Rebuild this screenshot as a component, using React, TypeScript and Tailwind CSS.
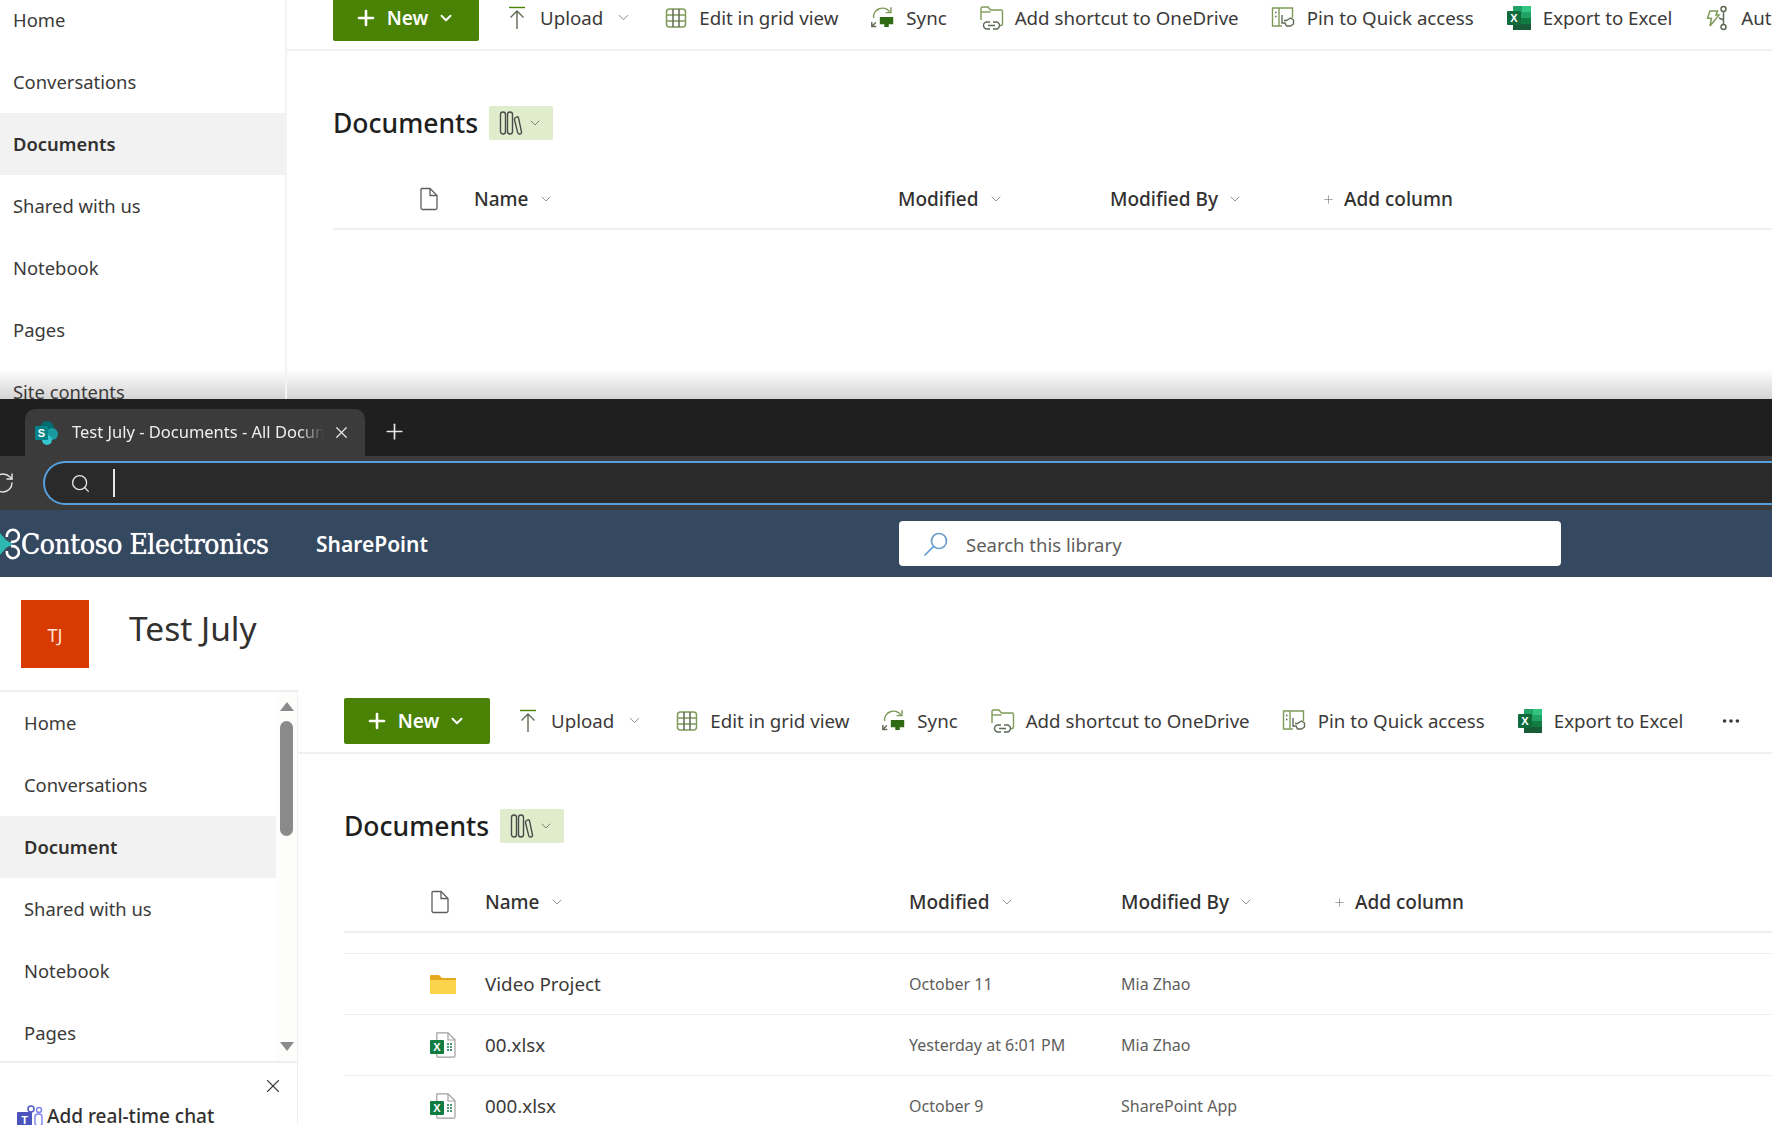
import React from 'react';
import { ChevronDown, Plus, Search, X, RotateCw, MoreHorizontal } from 'lucide-react';

const UI_FONT = 'font-["Noto_Sans",sans-serif]';

const GREEN = '#498205';
const OLIVE = '#7d9a58';
const GREY = '#5f6b55';

function UploadIcon() {
  return (
    <svg width="24" height="26" viewBox="0 0 24 26" fill="none" stroke={GREEN} strokeWidth="1.4">
      <path d="M4 2.5h16" />
      <path d="M12 24V6M5.5 12.5L12 6l6.5 6.5" stroke={GREY} />
    </svg>
  );
}

function GridIcon() {
  return (
    <svg width="24" height="24" viewBox="0 0 24 24" fill="none" stroke={OLIVE} strokeWidth="1.5">
      <rect x="2.5" y="3" width="19" height="18" rx="3" />
      <path d="M2.5 9h19M2.5 15h19" />
      <path d="M9 3v18M15 3v18" stroke={GREY} />
    </svg>
  );
}

function SyncIcon() {
  return (
    <svg width="25" height="24" viewBox="0 0 28 26" fill="none" stroke={OLIVE} strokeWidth="1.6">
      <path d="M4 13a10 10 0 0 1 18-7" />
      <path d="M23.500 1v6h-6" />
      <path d="M2 17.500v5h5M2.500 22l4-4" stroke={GREY} />
      <path d="M11 12h15v8h-5v3h-5v-3h-5z" fill="#2f6b12" stroke="none" />
    </svg>
  );
}

function ShortcutIcon() {
  return (
    <svg width="25" height="26" viewBox="0 0 25 26" fill="none" stroke={OLIVE} strokeWidth="1.4">
      <path d="M2 15V3.500A1.500 1.500 0 0 1 3.500 2H9l2.500 3H22a1.500 1.500 0 0 1 1.500 1.500V19a1.500 1.500 0 0 1-1.500 1.500h-1" />
      <path d="M2 7h9.500" />
      <path d="M11 17H8a3.500 3.500 0 0 0 0 7h3M14 17h3a3.500 3.500 0 0 1 0 7h-3M9 20.500h7" stroke={GREY} />
    </svg>
  );
}

function PinIcon() {
  return (
    <svg width="25" height="24" viewBox="0 0 25 24" fill="none" stroke={OLIVE} strokeWidth="1.4">
      <path d="M11 20H1.500V2h20v10" />
      <path d="M8 2v18" />
      <path d="M4 6.500h1.500M4 10.500h1.500" stroke={GREY} />
      <path d="M11 9v8h3l1.500 3h4l3-2v-4l-3-2-4 2.500H13" stroke={GREY} />
    </svg>
  );
}

function ExcelIcon() {
  return (
    <svg width="26" height="26" viewBox="0 0 26 26">
      <rect x="7" y="1" width="18" height="24" rx="1" fill="#21a366" />
      <rect x="16" y="1" width="9" height="6" fill="#33c481" />
      <rect x="7" y="13" width="18" height="6" fill="#107c41" />
      <rect x="7" y="19" width="18" height="6" fill="#185c37" />
      <rect x="1" y="6" width="14" height="14" rx="1" fill="#0f6b3c" />
      <text x="8" y="17" fontSize="11" fontWeight="700" fill="#fff" textAnchor="middle" fontFamily="Liberation Sans">
        X
      </text>
    </svg>
  );
}

function AutomateIcon() {
  return (
    <svg width="26" height="26" viewBox="0 0 26 26" fill="none" stroke={OLIVE} strokeWidth="1.5">
      <path d="M6 6h7.500l-1.500 4h3l-9 11 1.500-7.500-4-.5z" />
      <circle cx="19.500" cy="4" r="2.500" stroke={GREY} />
      <circle cx="19.500" cy="22" r="2.500" stroke={GREY} />
      <path d="M19.500 6.500v13M15 13l4.500 2" stroke={GREY} />
    </svg>
  );
}

function LibraryIcon() {
  return (
    <svg width="24" height="26" viewBox="0 0 24 26" fill="none" stroke="#4a4a48" strokeWidth="1.4">
      <rect x="1.500" y="2" width="5" height="22" rx="2.500" />
      <rect x="8.500" y="2" width="5" height="22" rx="2.500" />
      <path d="M15.500 8.500l2-1.500c1-.6 1.800 0 2 .8l3 14c.3 1.300-.5 2-1.500 2.200s-2-.3-2.300-1.400l-3.200-13z" />
    </svg>
  );
}

function PageIcon() {
  return (
    <svg width="20" height="24" viewBox="0 0 20 24" fill="none" stroke="#605e5c" strokeWidth="1.3">
      <path d="M3 1.500h8l7 7V21a1.500 1.500 0 0 1-1.500 1.500h-13A1.500 1.500 0 0 1 2 21V2.500a1 1 0 0 1 1-1z" />
      <path d="M11 1.500v7h7" />
    </svg>
  );
}

function FolderIcon() {
  return (
    <svg width="26" height="20" viewBox="0 0 26 20">
      <path d="M0 2a1 1 0 0 1 1-1h8l3 3h13a1 1 0 0 1 1 1v14a1 1 0 0 1-1 1H1a1 1 0 0 1-1-1z" fill="#e4a91c" />
      <path d="M0 6h26v13a1 1 0 0 1-1 1H1a1 1 0 0 1-1-1z" fill="#fcd34d" />
    </svg>
  );
}

function XlsxIcon() {
  return (
    <svg width="26" height="26" viewBox="0 0 26 26">
      <path d="M7 .8h11l7 7V24a1.200 1.200 0 0 1-1.200 1.200H8A1.200 1.200 0 0 1 6.800 24V1z" fill="#fff" stroke="#a19f9d" strokeWidth="1.200" />
      <path d="M18 1v7h7" fill="none" stroke="#a19f9d" strokeWidth="1.200" />
      <path d="M17 11h2v2h-2zM20 11h2v2h-2zM17 14h2v2h-2zM20 14h2v2h-2zM17 17h2v2h-2zM20 17h2v2h-2z" fill="#4a9a78" />
      <rect x="0" y="8" width="14" height="14" rx="1" fill="#107c41" />
      <text x="7" y="19" fontSize="11" fontWeight="700" fill="#fff" textAnchor="middle" fontFamily="Liberation Sans">
        X
      </text>
    </svg>
  );
}

function SharePointLogo() {
  return (
    <svg width="24" height="24" viewBox="0 0 24 24">
      <circle cx="12" cy="7" r="7" fill="#036c70" />
      <circle cx="17" cy="13" r="6" fill="#1a9ba1" />
      <circle cx="12" cy="19" r="5" fill="#37c6d0" />
      <rect x="0" y="5" width="13" height="14" rx="1" fill="#038387" />
      <text x="6.500" y="16" fontSize="11" fontWeight="700" fill="#fff" textAnchor="middle" fontFamily="Liberation Sans">
        S
      </text>
    </svg>
  );
}

function ContosoLogo() {
  return (
    <svg width="20" height="38" viewBox="0 0 20 38" fill="none">
      <path d="M0 8l6 7 7 4-7 4-6 7z" fill="#2fb8b0" />
      <path d="M7 12a6 6 0 1 1 4 4.500" stroke="#fff" strokeWidth="2.600" />
      <path d="M7 26a6 6 0 1 0 4-4.500" stroke="#fff" strokeWidth="2.600" />
    </svg>
  );
}

function LibrarySearchIcon() {
  return (
    <svg width="26" height="26" viewBox="0 0 26 26" fill="none" stroke="#5b9bd5" strokeWidth="1.700">
      <circle cx="16" cy="10" r="7.500" stroke="#6f9fc8" />
      <path d="M10.500 15.500L2 24" strokeLinecap="round" />
    </svg>
  );
}

function TeamsIcon() {
  return (
    <svg width="26" height="22" viewBox="0 0 26 22">
      <circle cx="14" cy="4" r="3" fill="none" stroke="#5059c9" strokeWidth="1.500" />
      <circle cx="22" cy="5" r="2.500" fill="none" stroke="#7b83eb" strokeWidth="1.400" />
      <rect x="18" y="9" width="7" height="12" rx="3" fill="none" stroke="#7b83eb" strokeWidth="1.400" />
      <rect x="0" y="7" width="15" height="15" rx="1" fill="#4b53bc" />
      <text x="7.500" y="18.500" fontSize="11" fontWeight="700" fill="#fff" textAnchor="middle" fontFamily="Liberation Sans">
        T
      </text>
    </svg>
  );
}

function ToolbarItem({ icon, label, chevron }: { icon: React.ReactNode; label: string; chevron?: boolean }) {
  return (
    <div className="flex items-center gap-[11px] text-[18.700px] text-[#3b3a39] whitespace-nowrap">
      {icon}
      <span>{label}</span>
      {chevron && <ChevronDown size={17} strokeWidth={1.200} className="ml-[1px] text-[#7a7876]" />}
    </div>
  );
}

function Toolbar({ children, more }: { children?: React.ReactNode; more?: boolean }) {
  return (
    <div className="flex h-[62px] shrink-0 items-center gap-[32px] border-b-2 border-[#f0f0f0] pb-[2px] pl-[46px]">
      <div className="-mr-[6px] flex h-[46px] w-[146px] shrink-0 items-center justify-center gap-[9px] rounded-[2px] bg-[#498205] pr-[3px] text-[19px] font-semibold text-white">
        <Plus size={24} strokeWidth={2.600} />
        <span>New</span>
        <ChevronDown size={18} strokeWidth={2.600} />
      </div>
      <ToolbarItem icon={<UploadIcon />} label="Upload" chevron />
      <ToolbarItem icon={<GridIcon />} label="Edit in grid view" />
      <ToolbarItem icon={<SyncIcon />} label="Sync" />
      <ToolbarItem icon={<ShortcutIcon />} label="Add shortcut to OneDrive" />
      <ToolbarItem icon={<PinIcon />} label="Pin to Quick access" />
      <ToolbarItem icon={<ExcelIcon />} label="Export to Excel" />
      {children}
      {more && <MoreHorizontal size={22} className="ml-[5px] text-[#3b3a39]" />}
    </div>
  );
}

function ColumnHeader({ label, width }: { label: string; width: string }) {
  return (
    <div className={`flex items-center gap-[9px] text-[19px] font-medium text-[#323130] ${width}`}>
      <span>{label}</span>
      <ChevronDown size={16} strokeWidth={1.200} className="text-[#7a7876]" />
    </div>
  );
}

function LibraryHeader() {
  return (
    <div className="pl-[46px]">
      <div className="mt-[55px] flex h-[34px] items-center gap-[11px]">
        <h2 className="mt-[1px] text-[26.500px] font-medium leading-none text-[#201f1e]">Documents</h2>
        <div className="flex h-[34px] w-[64px] items-center justify-center gap-[4px] rounded-[2px] bg-[#dfedcd]">
          <LibraryIcon />
          <ChevronDown size={16} strokeWidth={1.200} className="text-[#5f6b55]" />
        </div>
      </div>
      <div className="mt-[32px] flex h-[58px] items-center border-b-2 border-[#f0f0f0] pb-[2px]">
        <div className="flex w-[141px] shrink-0 justify-end pr-[35px]">
          <PageIcon />
        </div>
        <ColumnHeader label="Name" width="w-[424px]" />
        <ColumnHeader label="Modified" width="w-[212px]" />
        <ColumnHeader label="Modified By" width="w-[212px]" />
        <div className="flex items-center gap-[9px] text-[19px] font-medium text-[#323130]">
          <Plus size={13} strokeWidth={1.200} className="text-[#7a7876]" />
          <span>Add column</span>
        </div>
      </div>
    </div>
  );
}

function FileRow({ icon, name, date, author }: { icon: React.ReactNode; name: string; date: string; author: string }) {
  return (
    <div className="flex h-[61px] shrink-0 items-center border-b border-[#f0f0f0]">
      <div className="flex w-[141px] shrink-0 justify-end pr-[29px]">{icon}</div>
      <span className="w-[424px] text-[18.800px] text-[#3b3a39]">{name}</span>
      <span className="w-[212px] text-[16px] text-[#605e5c]">{date}</span>
      <span className="text-[16px] text-[#605e5c]">{author}</span>
    </div>
  );
}

function NavItem({ label, active }: { label: string; active?: boolean }) {
  return (
    <div
      className={`flex h-[62px] shrink-0 items-center text-[18.400px] ${
        active ? 'bg-[#f2f2f2] font-semibold text-[#323130]' : 'text-[#3b3a39]'
      }`}
    >
      {label}
    </div>
  );
}

export default function App() {
  return (
    <div className={`flex h-[1125px] flex-col overflow-hidden bg-white ${UI_FONT}`}>
      {/* window behind, scrolled up */}
      <div className="relative flex h-[399px] shrink-0 overflow-hidden">
        <div className="absolute inset-x-0 bottom-0 h-[30px] bg-gradient-to-b from-white/0 to-[#c9c9c9]/80" />
        <div className="relative -mt-[11px] w-[287px] shrink-0 border-r-2 border-[#f3f3f3] [&>div]:pl-[13px]">
          <NavItem label="Home" />
          <NavItem label="Conversations" />
          <NavItem label="Documents" active />
          <NavItem label="Shared with us" />
          <NavItem label="Notebook" />
          <NavItem label="Pages" />
          <NavItem label="Site contents" />
        </div>
        <div className="relative -mt-[11px] min-w-0 flex-1 overflow-hidden">
          <Toolbar>
            <ToolbarItem icon={<AutomateIcon />} label="Automate" />
          </Toolbar>
          <LibraryHeader />
        </div>
      </div>

      {/* tab strip */}
      <div className="flex h-[57px] shrink-0 items-end bg-[#1f1f1f] pl-[25px]">
        <div className="flex h-[47px] w-[340px] items-center rounded-t-[10px] bg-[#3b3b3b] pl-[10px]">
          <SharePointLogo />
          <span className="ml-[13px] w-[252px] overflow-hidden whitespace-nowrap text-[16.500px] text-[#eeeeee] [mask-image:linear-gradient(to_right,black_90%,transparent)]">
            Test July - Documents - All Documents
          </span>
          <X size={19} strokeWidth={1.600} className="ml-[8px] text-[#e6e6e6]" />
        </div>
        <Plus size={25} strokeWidth={1.600} className="mb-[12px] ml-[17px] text-[#e6e6e6]" />
      </div>

      {/* address bar */}
      <div className="flex h-[54px] shrink-0 items-center bg-[#3b3b3b]">
        <RotateCw size={24} strokeWidth={1.400} className="-ml-[9px] shrink-0 text-[#e6e6e6]" />
        <div className="ml-[28px] flex h-[44px] flex-1 items-center rounded-l-[22px] border-[2.500px] border-r-0 border-[#559fdc] bg-[#2a2a2a] pl-[25px]">
          <Search size={21} strokeWidth={1.500} className="text-[#e6e6e6]" />
          <div className="ml-[22px] h-[28px] w-[2px] bg-[#e6e6e6]" />
        </div>
      </div>

      {/* site suite bar */}
      <div className="flex h-[67px] shrink-0 items-center bg-[#34495f] text-white">
        <div className="w-[21px] shrink-0">
          <ContosoLogo />
        </div>
        <span className="mt-[3px] w-[295px] shrink-0 font-['DejaVu_Serif',serif] text-[28px] tracking-[-0.450px] [font-stretch:condensed] [text-shadow:0_0_0.7px_white]">
          Contoso Electronics
        </span>
        <span className="mt-[2px] w-[583px] shrink-0 text-[21px] font-semibold">SharePoint</span>
        <div className="flex h-[45px] w-[662px] items-center rounded-[4px] bg-white pl-[24px] text-[18.500px] text-[#605e5c]">
          <LibrarySearchIcon />
          <span className="ml-[17px] mt-[2px]">Search this library</span>
        </div>
      </div>

      {/* site header */}
      <div className="flex h-[113px] shrink-0 items-center gap-[40px] pt-[1px] pl-[21px]">
        <div className="flex h-[68px] w-[68px] items-center justify-center bg-[#d83b01] pt-[2px] text-[18px] text-[#ffe3d6]">
          TJ
        </div>
        <h1 className="-mt-[12px] text-[33.500px] text-[#323130]">Test July</h1>
      </div>

      {/* page body */}
      <div className="flex min-h-0 flex-1 overflow-hidden">
        <div className="flex w-[298px] shrink-0 flex-col border-r border-t-2 border-[#f0f0f0]">
          <div className="flex h-[371px] shrink-0 border-b-2 border-[#eeeeee]">
            <div className="w-[276px] shrink-0 overflow-hidden [&>div]:pl-[24px]">
              <NavItem label="Home" />
              <NavItem label="Conversations" />
              <NavItem label="Document" active />
              <NavItem label="Shared with us" />
              <NavItem label="Notebook" />
              <NavItem label="Pages" />
            </div>
            <div className="flex flex-1 flex-col items-center bg-[#fdfdfb] pt-[10px]">
              <div className="h-0 w-0 border-x-[7px] border-b-[9px] border-x-transparent border-b-[#8a8a8a]" />
              <div className="mt-[10px] h-[115px] w-[13px] rounded-full bg-[#8a8a8a]" />
              <div className="mt-auto mb-[10px] h-0 w-0 border-x-[7px] border-t-[9px] border-x-transparent border-t-[#8a8a8a]" />
            </div>
          </div>
          <div className="flex justify-end pt-[12px] pr-[13px]">
            <X size={22} strokeWidth={1.200} className="text-[#3b3a39]" />
          </div>
          <div className="mt-[5px] flex items-center gap-[4px] pl-[17px] text-[19px] font-medium text-[#323130]">
            <TeamsIcon />
            <span>Add real-time chat</span>
          </div>
        </div>
        <div className="min-w-0 flex-1 overflow-hidden pt-[2px]">
          <Toolbar more />
          <LibraryHeader />
          <div className="ml-[46px] mt-[20px] flex flex-col border-t border-[#f0f0f0]">
            <FileRow icon={<FolderIcon />} name="Video Project" date="October 11" author="Mia Zhao" />
            <FileRow icon={<XlsxIcon />} name="00.xlsx" date="Yesterday at 6:01 PM" author="Mia Zhao" />
            <FileRow icon={<XlsxIcon />} name="000.xlsx" date="October 9" author="SharePoint App" />
          </div>
        </div>
      </div>
    </div>
  );
}
